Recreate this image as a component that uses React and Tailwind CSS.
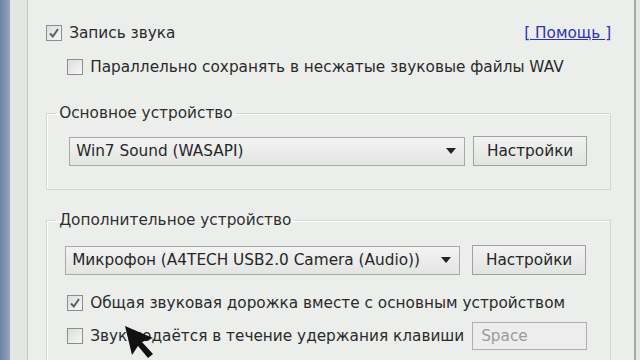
import React from 'react'

const font = { fontFamily: '"DejaVu Sans", "Noto Sans", sans-serif' }

const Check = ({ checked }) => (
  <span className="w-[16px] h-[16px] shrink-0 border border-[#8c8e8c] bg-gradient-to-br from-[#dcdedc] to-[#f6f7f6] flex items-center justify-center">
    {checked && (
      <svg width="12" height="12" viewBox="0 0 12 12">
        <path d="M2 6.5 L4.8 9.5 L10 2" fill="none" stroke="#5a5e66" strokeWidth="2" />
      </svg>
    )}
  </span>
)

const Select = ({ text, className }) => (
  <div className={`h-[29px] border border-[#a8aaa8] bg-gradient-to-b from-[#f2f3f2] to-[#e3e5e3] flex items-center justify-between pl-[6px] pr-[8px] ${className}`}>
    <span className="text-[#262626]">{text}</span>
    <svg width="10" height="6" viewBox="0 0 10 6">
      <path d="M0 0 L10 0 L5 6 Z" fill="#222" />
    </svg>
  </div>
)

const Button = ({ children }) => (
  <div className="w-[114px] h-[30px] border border-[#a0a2a0] bg-gradient-to-b from-[#f1f2f1] to-[#e2e4e2] flex items-center justify-center text-[#262626]">
    {children}
  </div>
)

export default function App() {
  return (
    <div className="w-[640px] h-[360px] overflow-hidden flex bg-[#eceeec] text-[15.3px] relative" style={font}>
      {/* window frame */}
      <div className="w-[10px] bg-gradient-to-r from-[#6a83a4] to-[#94a6bc]" />
      <div className="w-[19px] bg-[#e4e6e4] border-r border-[#c2c6c2]" />

      <div className="flex-1 pl-[18px] pr-[23px] pt-[25px] flex flex-col">
        {/* record row */}
        <div className="flex items-center justify-between h-[16px]">
          <div className="flex items-center gap-[7px]">
            <Check checked />
            <span className="text-[#2a2a2a]">Запись звука</span>
          </div>
          <a className="text-[#2e34b4] underline">[ Помощь ]</a>
        </div>

        <div className="flex items-center gap-[7px] h-[16px] mt-[18px] ml-[21px]">
          <Check />
          <span className="text-[#2a2a2a]">Параллельно сохранять в несжатые звуковые файлы WAV</span>
        </div>

        {/* main device */}
        <fieldset className="mt-[29px] border border-[#d2d5d2] shadow-[inset_1px_1px_0_#fff] pl-[22px] pr-[23px] pt-[14px] pb-[23px]">
          <legend className="-ml-[13px] px-[3px] text-[#2e2e2e] leading-[18px]">Основное устройство</legend>
          <div className="flex items-center gap-[8px]">
            <Select text="Win7 Sound (WASAPI)" className="w-[396px]" />
            <Button>Настройки</Button>
          </div>
        </fieldset>

        {/* extra device */}
        <fieldset className="mt-[21px] border border-[#d2d5d2] shadow-[inset_1px_1px_0_#fff] pl-[18px] pr-[23px] pt-[16px] pb-[20px]">
          <legend className="-ml-[9px] px-[3px] text-[#2e2e2e] leading-[18px]">Дополнительное устройство</legend>
          <div className="flex items-center gap-[12px]">
            <Select text="Микрофон (A4TECH USB2.0 Camera (Audio))" className="w-[395px]" />
            <Button>Настройки</Button>
          </div>
          <div className="flex items-center gap-[7px] h-[16px] mt-[20px] ml-[2px]">
            <Check checked />
            <span className="text-[#2a2a2a]">Общая звуковая дорожка вместе с основным устройством</span>
          </div>
          <div className="flex items-center justify-between mt-[11px] ml-[2px]">
            <div className="flex items-center gap-[7px]">
              <Check />
              <span className="text-[#2a2a2a]">Звук подаётся в течение удержания клавиши</span>
            </div>
            <div className="w-[115px] h-[28px] border border-[#aeb0ae] bg-[#ecedec] flex items-center pl-[8px] text-[#9a9c9a]">
              Space
            </div>
          </div>
        </fieldset>
      </div>

      <div className="w-[6px] border-l-2 border-[#a6aaa6] bg-[#e6e8e6]" />

      {/* mouse cursor */}
      <svg className="absolute left-[123px] top-[324px]" width="36" height="36" viewBox="0 0 36 36">
        <path d="M2 2 L30 14 L19 18 L30 30 L25 34 L15 22 L9 31 Z" fill="#111" />
      </svg>
    </div>
  )
}
